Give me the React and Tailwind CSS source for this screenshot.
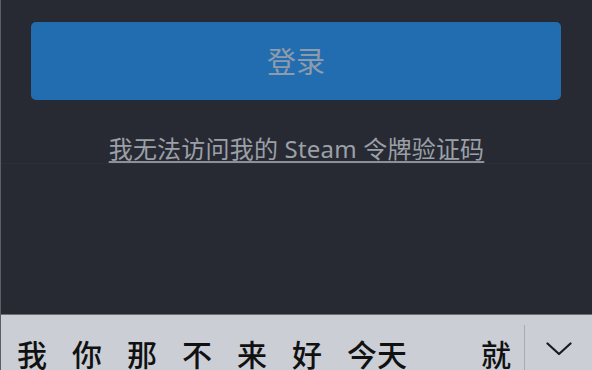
import React from 'react';

const candidates = ['我', '你', '那', '不', '来', '好', '今天'];

function App() {
  return (
    <div
      className="w-[592px] h-[370px] flex flex-col bg-[#282a33] border-l border-[#5c5e66] overflow-hidden"
      style={{ fontFamily: '"Noto Sans", "Noto Sans CJK SC", sans-serif' }}
    >
      {/* login button */}
      <div className="pt-[22px] pl-[30px] pr-[31px]">
        <div className="h-[78px] rounded-[5px] bg-[#226db0] flex items-center justify-center">
          <span className="text-[29px] leading-none text-[#8d9bab]">登录</span>
        </div>
      </div>

      {/* help link */}
      <div className="mt-[34px] flex justify-center">
        <span className="text-[24px] leading-[29px] tracking-[0.2px] text-[#9ba0a8] underline underline-offset-[3px] decoration-[2px] decoration-[#8b8f97]">
          我无法访问我的 Steam 令牌验证码
        </span>
      </div>

      <div className="flex-1 border-t border-[#2d2f38] bg-[#282a33]"></div>

      {/* IME candidate bar */}
      <div className="h-[56px] bg-[#cbced5] border-t border-[#6e7078] flex items-start">
        <div className="flex items-start pt-[22px] pl-[16px] gap-[25px] text-[30px] leading-[36px] font-medium text-[#111]">
          {candidates.map((c) => (
            <span key={c}>{c}</span>
          ))}
          <span className="ml-[49px]">就</span>
        </div>
        <div className="ml-[13px] mt-[10px] w-[1px] h-[46px] bg-[#a9abb2]"></div>
        <div className="flex-1 flex justify-center pt-[27px]">
          <svg width="26" height="14" viewBox="0 0 26 14" fill="none">
            <path d="M1.5 1.5 L13 12 L24.5 1.5" stroke="#1a1a1a" strokeWidth="2.2" strokeLinecap="round" strokeLinejoin="round" />
          </svg>
        </div>
      </div>
    </div>
  );
}

export default App;
